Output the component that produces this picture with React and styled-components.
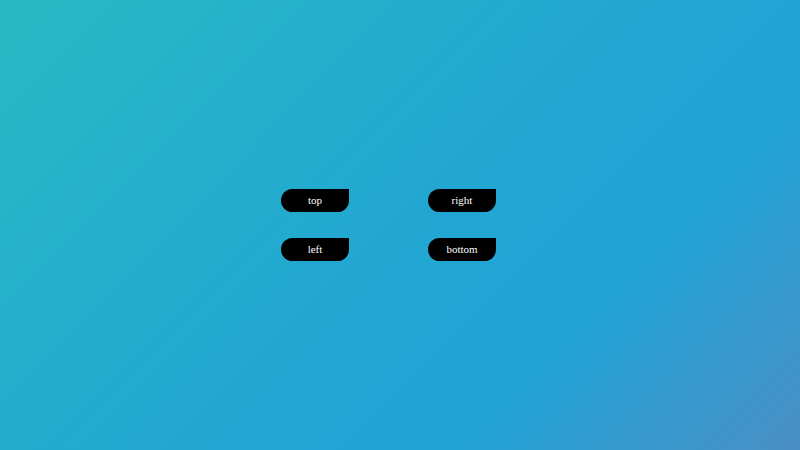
import React from 'react';
import styled, { createGlobalStyle } from 'styled-components';

const Global = createGlobalStyle`
  html, body {
    margin: 0;
    height: 100%;
  }
  #root {
    height: 100%;
  }
`;

const Page = styled.div`
  height: 100%;
  display: flex;
  align-items: center;
  justify-content: center;
  background: linear-gradient(135deg, #27bac3 0%, #22a7d2 50%, #21a3d6 72%, #4a8fc6 100%);
`;

const Grid = styled.div`
  display: grid;
  grid-template-columns: 68px 68px;
  column-gap: 79px;
  row-gap: 26px;
  margin-right: 23px;
  margin-bottom: 1px;
`;

const Tip = styled.button`
  width: 68px;
  height: 23px;
  padding: 0;
  border: none;
  border-radius: 12px 0 12px 12px;
  background: #000;
  color: #fff;
  font-family: "Liberation Serif", "Times New Roman", serif;
  font-size: 11px;
  cursor: pointer;
`;

export default function App() {
  return (
    <>
      <Global />
      <Page>
        <Grid>
          {['top', 'right', 'left', 'bottom'].map((label) => (
            <Tip key={label}>{label}</Tip>
          ))}
        </Grid>
      </Page>
    </>
  );
}
